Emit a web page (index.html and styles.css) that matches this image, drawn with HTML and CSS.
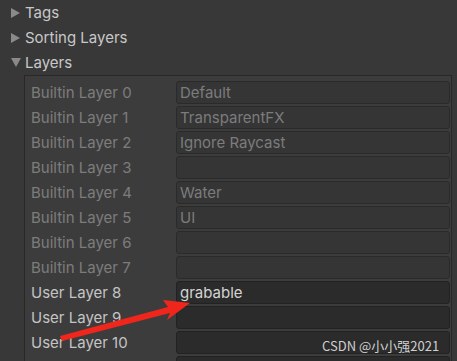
FILE: index.html
```html
<!DOCTYPE html>
<html>
<head>
<meta charset="utf-8">
<link rel="stylesheet" href="styles.css">
</head>
<body>
<div class="inspector">
  <div class="foldout"><span class="tri right"></span><span class="ftext">Tags</span></div>
  <div class="foldout"><span class="tri right"></span><span class="ftext">Sorting Layers</span></div>
  <div class="foldout"><span class="tri down"></span><span class="ftext">Layers</span></div>
  <div class="panel">
    <div class="row dis"><span class="label">Builtin Layer 0</span><span class="field">Default</span></div>
    <div class="row dis"><span class="label">Builtin Layer 1</span><span class="field">TransparentFX</span></div>
    <div class="row dis"><span class="label">Builtin Layer 2</span><span class="field">Ignore Raycast</span></div>
    <div class="row dis"><span class="label">Builtin Layer 3</span><span class="field"></span></div>
    <div class="row dis"><span class="label">Builtin Layer 4</span><span class="field">Water</span></div>
    <div class="row dis"><span class="label">Builtin Layer 5</span><span class="field">UI</span></div>
    <div class="row dis"><span class="label">Builtin Layer 6</span><span class="field"></span></div>
    <div class="row dis"><span class="label">Builtin Layer 7</span><span class="field"></span></div>
    <div class="row"><span class="label">User Layer 8</span><span class="field">grabable</span></div>
    <div class="row"><span class="label">User Layer 9</span><span class="field"></span></div>
    <div class="row"><span class="label">User Layer 10</span><span class="field"></span></div>
    <div class="row"><span class="label"></span><span class="field"></span></div>
  </div>
</div>
<svg class="arrow" width="457" height="361" viewBox="0 0 457 361">
  <path d="M62 341 L170 313 L167 320 L190 303 L163 300 L168 307 L60 336 Z" fill="#f0261d"/>
</svg>
<div class="watermark">CSDN @小小强2021</div>
</body>
</html>
```
FILE: styles.css
```css
html, body {
  margin: 0;
  padding: 0;
  background: #383838;
  width: 457px;
  height: 361px;
  overflow: hidden;
  font-family: Inter, "Noto Sans", sans-serif;
  font-size: 15px;
}
.inspector {
  display: flex;
  flex-direction: column;
}
.foldout {
  height: 25px;
  display: flex;
  align-items: center;
  color: #c8c8c8;
  padding-left: 11px;
}
.ftext {
  margin-left: 4px;
  padding-bottom: 1px;
}
.tri {
  width: 0;
  height: 0;
  display: inline-block;
}
.tri.right {
  border-top: 5px solid transparent;
  border-bottom: 5px solid transparent;
  border-left: 9px solid #8a8a8a;
  margin-right: 1px;
}
.tri.down {
  border-left: 5px solid transparent;
  border-right: 5px solid transparent;
  border-top: 9px solid #8a8a8a;
}
.panel {
  margin-left: 24px;
  width: 428px;
  box-sizing: border-box;
  border-top: 1px solid #282828;
  border-left: 1px solid #282828;
  border-right: 1px solid #282828;
  background: #3c3c3c;
  padding-top: 5px;
  display: flex;
  flex-direction: column;
}
.row {
  height: 25px;
  display: flex;
  align-items: flex-start;
  flex-shrink: 0;
}
.label {
  width: 145px;
  padding-left: 6px;
  line-height: 23px;
  color: #c4c4c4;
  white-space: nowrap;
}
.dis .label {
  color: #7c7c7c;
}
.field {
  width: 274px;
  height: 23px;
  box-sizing: border-box;
  border: 1px solid #222222;
  border-radius: 3px;
  background: #2b2b2b;
  color: #d4d4d4;
  line-height: 21px;
  padding-left: 3px;
}
.dis .field {
  background: #353535;
  border-color: #2a2a2a;
  color: #7c7c7c;
}
.arrow {
  position: absolute;
  left: 0;
  top: 0;
}
.watermark {
  position: absolute;
  left: 322px;
  top: 336px;
  font-family: "Noto Sans CJK SC", sans-serif;
  font-size: 13px;
  color: #cfcfcf;
}
```
